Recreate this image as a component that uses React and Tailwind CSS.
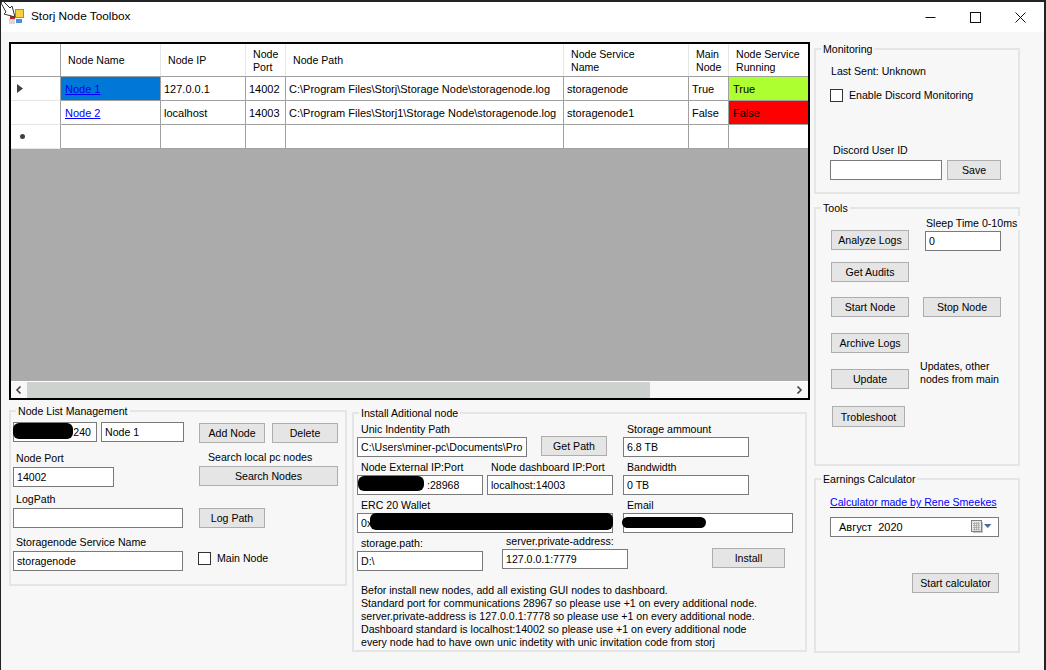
const cols = "grid grid-cols-[50px_100px_85px_40px_278px_125px_40px_79px]";

// Plain WinForms style controls
const Btn = ({ className = "", children }) => (
  <button type="button" className={`h-5 shrink-0 border border-[#adadad] bg-[#e5e5e5] text-center leading-[18px] text-black ${className}`}>
    {children}
  </button>
);

const Box = ({ className = "", children }) => (
  <div className={`relative h-5 shrink-0 whitespace-nowrap border border-[#7a7a7a] bg-white pl-[3px] leading-[18px] text-black ${className}`}>
    {children}
  </div>
);

const Label = ({ className = "", children }) => (
  <div className={`h-[14px] whitespace-nowrap pl-[3px] leading-[14px] ${className}`}>{children}</div>
);

const Field = ({ label, w, className = "", children }) => (
  <div className={`flex shrink-0 flex-col ${w} ${className}`}>
    <div className="h-[15px] whitespace-nowrap pl-[4px] leading-[14px]">{label}</div>
    <Box>{children}</Box>
  </div>
);

const Check = ({ label, className = "" }) => (
  <div className={`flex h-[13px] items-center gap-[6px] ${className}`}>
    <span className="h-[13px] w-[13px] border border-[#333] bg-white" />
    <span className="whitespace-nowrap pt-[1px]">{label}</span>
  </div>
);

const Group = ({ title, className = "", children }) => (
  <div className={`relative shrink-0 border-2 border-[#e3e6e4] ${className}`}>
    <span className="absolute -top-[8px] left-[5px] whitespace-nowrap bg-[#f7f7f7] px-[2px] leading-[14px]">{title}</span>
    {children}
  </div>
);

// Black marker strokes over private values
const Blot = ({ className = "" }) => <span className={`absolute rounded-[6px] bg-black ${className}`} />;

const Head = ({ children, className = "" }) => (
  <div className={`flex h-[32px] items-center border-r border-[#e6e6e6] pl-[7px] pt-[1px] leading-[13px] ${className}`}>{children}</div>
);

const Cell = ({ children, className = "" }) => (
  <div className={`flex h-[24px] items-center whitespace-nowrap border-b border-r border-[#a0a0a0] pl-[3px] pt-[1px] text-[11px] ${className}`}>{children}</div>
);

const RowHead = ({ children, className = "" }) => (
  <div className={`flex h-[24px] items-center border-b border-r border-b-[#e6e6e6] border-r-[#a0a0a0] ${className}`}>{children}</div>
);

const Link = ({ children }) => <span className="whitespace-nowrap text-[#0000ff] underline">{children}</span>;

const NodeGrid = () => (
  <div className="flex h-[358px] w-[801px] flex-col border-2 border-black bg-[#ababab]">
    <div className={`${cols} border-b border-[#a0a0a0] bg-white`}>
      <Head className="border-r-[#a0a0a0]" />
      <Head>Node Name</Head>
      <Head>Node IP</Head>
      <Head>Node<br />Port</Head>
      <Head>Node Path</Head>
      <Head>Node Service<br />Name</Head>
      <Head>Main<br />Node</Head>
      <Head className="whitespace-nowrap border-r-0">Node Service<br />Running</Head>
    </div>
    <div className={`${cols} bg-white`}>
      <RowHead className="pl-[6px]">
        <svg width="6" height="9" viewBox="0 0 6 9"><path d="M0 0l6 4.5L0 9z" fill="#404040" /></svg>
      </RowHead>
      <Cell className="bg-[#0078d7] pl-[4px]"><Link>Node 1</Link></Cell>
      <Cell>127.0.0.1</Cell>
      <Cell>14002</Cell>
      <Cell>C:\Program Files\Storj\Storage Node\storagenode.log</Cell>
      <Cell>storagenode</Cell>
      <Cell>True</Cell>
      <Cell className="border-r-0 bg-[#adff2f] pl-[4px]">True</Cell>

      <RowHead />
      <Cell className="pl-[4px]"><Link>Node 2</Link></Cell>
      <Cell>localhost</Cell>
      <Cell>14003</Cell>
      <Cell>C:\Program Files\Storj1\Storage Node\storagenode.log</Cell>
      <Cell>storagenode1</Cell>
      <Cell>False</Cell>
      <Cell className="border-r-0 bg-[#ff0000] pl-[4px]">False</Cell>

      <RowHead className="border-b-[#a0a0a0] pl-[9px]">
        <span className="h-[5px] w-[5px] rounded-full bg-[#404040]" />
      </RowHead>
      <Cell /><Cell /><Cell /><Cell /><Cell /><Cell />
      <Cell className="border-r-0" />
    </div>
    <div className="flex-1" />
    <div className="flex h-[17px] items-center border-t border-white bg-[#f7f7f7]">
      <svg className="ml-[4px] mr-[5px] shrink-0" width="7" height="8" viewBox="0 0 7 8"><path d="M5.5 0.5L2 4l3.5 3.5" fill="none" stroke="#444" strokeWidth="1.6" /></svg>
      <div className="h-full w-[623px] bg-[#cdd2cf]" />
      <div className="flex-1" />
      <svg className="ml-[5px] mr-[5px] shrink-0" width="7" height="8" viewBox="0 0 7 8"><path d="M1.5 0.5L5 4 1.5 7.5" fill="none" stroke="#444" strokeWidth="1.6" /></svg>
    </div>
  </div>
);

const NodeList = () => (
  <Group title="Node List Management" className="flex h-[176px] w-[338px] pl-[2px] pt-[10px]">
    <div className="flex w-[171px] shrink-0 flex-col">
      <div className="flex gap-[4px]">
        <Box className="w-[84px] pr-[5px] text-right">
          240
          <Blot className="-left-[1px] top-0 h-[16px] w-[60px]" />
        </Box>
        <Box className="w-[83px]">Node 1</Box>
      </div>
      <Label className="mt-[9px]">Node Port</Label>
      <Box className="mt-[2px] w-[101px]">14002</Box>
      <Label className="mt-[5px]">LogPath</Label>
      <Box className="mt-[2px] w-[170px]" />
      <Label className="mt-[7px]">Storagenode Service Name</Label>
      <Box className="mt-[2px] w-[170px]">storagenode</Box>
    </div>
    <div className="ml-[15px] flex w-[139px] shrink-0 flex-col">
      <div className="mt-[1px] flex gap-[7px]">
        <Btn className="w-[66px]">Add Node</Btn>
        <Btn className="w-[66px]">Delete</Btn>
      </div>
      <Label className="ml-[6px] mt-[7px]">Search local pc nodes</Label>
      <Btn className="mt-[2px] w-[139px]">Search Nodes</Btn>
      <Btn className="mt-[22px] w-[66px]">Log Path</Btn>
      <Check label="Main Node" className="-ml-[1px] mt-[24px]" />
    </div>
  </Group>
);

const InstallNode = () => (
  <Group title="Install Aditional node" className="mt-[2px] flex h-[240px] w-[455px] flex-col gap-[3px] pl-[3px] pt-[8px]">
    <div className="flex">
      <Field label="Unic Indentity Path" w="w-[170px]">
        <div className="overflow-hidden">C:\Users\miner-pc\Documents\Pro</div>
      </Field>
      <Btn className="ml-[14px] mt-[14px] w-[66px]">Get Path</Btn>
      <Field label="Storage ammount" w="w-[126px]" className="ml-[16px]">6.8 TB</Field>
    </div>
    <div className="flex">
      <Field label="Node External IP:Port" w="w-[126px]">
        <div className="pl-[66px]">:28968</div>
        <Blot className="left-0 top-0 h-[15px] w-[66px]" />
      </Field>
      <Field label="Node dashboard IP:Port" w="w-[126px]" className="ml-[4px]">localhost:14003</Field>
      <Field label="Bandwidth" w="w-[126px]" className="ml-[10px]">0 TB</Field>
    </div>
    <div className="flex">
      <Field label="ERC 20 Wallet" w="w-[256px]">
        0x
        <Blot className="left-[12px] -top-[1px] h-[17px] w-[243px]" />
      </Field>
      <Field label="Email" w="w-[170px]" className="ml-[10px]">
        <Blot className="-left-[2px] top-[3px] h-[11px] w-[84px]" />
      </Field>
    </div>
    <div className="flex">
      <Field label="storage.path:" w="w-[126px]">D:\</Field>
      <Field label="server.private-address:" w="w-[126px]" className="-mt-[2px] ml-[19px]">127.0.0.1:7779</Field>
      <Btn className="ml-[84px] mt-[12px] w-[73px]">Install</Btn>
    </div>
    <div className="ml-[4px] mt-[10px] whitespace-nowrap leading-[13px]">
      Befor install new nodes, add all existing GUI nodes to dashboard.<br />
      Standard port for communications 28967 so please use +1 on every additional node.<br />
      server.private-address is 127.0.0.1:7778 so please use +1 on every additional node.<br />
      Dashboard standard is localhost:14002 so please use +1 on every additional node<br />
      every node had to have own unic indetity with unic invitation code from storj
    </div>
  </Group>
);

const Monitoring = () => (
  <Group title="Monitoring" className="flex h-[146px] w-[206px] flex-col pl-[14px]">
    <Label className="-ml-[2px] mt-[14px]">Last Sent: Unknown</Label>
    <Check label="Enable Discord Monitoring" className="mt-[11px]" />
    <Label className="mt-[41px]">Discord User ID</Label>
    <div className="mt-[3px] flex gap-[5px]">
      <Box className="w-[112px]" />
      <Btn className="w-[54px]">Save</Btn>
    </div>
  </Group>
);

const Tools = () => (
  <Group title="Tools" className="mt-[13px] flex h-[259px] w-[206px] flex-col pl-[15px]">
    <div className="mt-[7px] flex">
      <Btn className="mt-[14px] w-[78px]">Analyze Logs</Btn>
      <div className="ml-[16px] flex shrink-0 flex-col">
        <div className="h-[14px] w-[96px] whitespace-nowrap bg-[#f7f7f7] pl-[1px] leading-[14px]">Sleep Time 0-10ms</div>
        <Box className="mt-[1px] w-[76px]">0</Box>
      </div>
    </div>
    <Btn className="mt-[11px] w-[78px]">Get Audits</Btn>
    <div className="mt-[15px] flex gap-[14px]">
      <Btn className="w-[78px]">Start Node</Btn>
      <Btn className="w-[78px]">Stop Node</Btn>
    </div>
    <Btn className="mt-[16px] w-[78px]">Archive Logs</Btn>
    <div className="mt-[16px] flex">
      <Btn className="w-[78px]">Update</Btn>
      <div className="-mt-[9px] ml-[11px] whitespace-nowrap leading-[13px]">Updates, other<br />nodes from main</div>
    </div>
    <Btn className="ml-[1px] mt-[17px] h-[21px] w-[73px]">Trobleshoot</Btn>
  </Group>
);

const Earnings = () => (
  <Group title="Earnings Calculator" className="mt-[12px] flex h-[175px] w-[206px] flex-col pl-[14px]">
    <div className="mt-[15px] h-[14px] leading-[14px]"><Link>Calculator made by Rene Smeekes</Link></div>
    <div className="mt-[8px] flex h-5 w-[169px] items-center border border-[#7a7a7a] bg-white pl-[8px] pr-[6px]">
      <span className="flex-1 whitespace-pre text-[11px]">Август  2020</span>
      <svg width="21" height="14" viewBox="0 0 21 14">
        <rect x="0.5" y="0.5" width="10" height="11" fill="#e8e8e8" stroke="#808080" />
        <path d="M2 3.5h7M2 5.5h7M2 7.5h7M2 9.5h7M3.5 2v8.5M5.5 2v8.5M7.5 2v8.5" stroke="#a8a8a8" strokeWidth="0.8" />
        <path d="M11.5 2v10.5H2" fill="none" stroke="#c4c4c4" />
        <path d="M13 4h7.5l-3.75 4z" fill="#4a6a8f" />
      </svg>
    </div>
    <Btn className="ml-[82px] mt-[36px] w-[87px]">Start calculator</Btn>
  </Group>
);

const AppIcon = () => (
  <svg className="shrink-0" width="16" height="16" viewBox="0 0 16 16">
    <rect x="0" y="10" width="6" height="5" fill="#d8d8d8" />
    <rect x="1" y="5" width="5" height="5" fill="#c8201c" />
    <rect x="6.5" y="0.5" width="8" height="8" fill="#f8d040" stroke="#b08a30" />
    <rect x="7" y="10" width="6" height="4" fill="#4a90d8" />
  </svg>
);

const TitleButtons = () => (
  <div className="flex">
    <div className="flex h-[30px] w-[45px] items-center justify-center">
      <svg width="11" height="11" viewBox="0 0 11 11"><path d="M0.5 5.5h10" stroke="#111" /></svg>
    </div>
    <div className="flex h-[30px] w-[45px] items-center justify-center">
      <svg width="11" height="11" viewBox="0 0 11 11"><rect x="0.5" y="0.5" width="10" height="10" fill="none" stroke="#111" /></svg>
    </div>
    <div className="flex h-[30px] w-[45px] items-center justify-center">
      <svg width="11" height="11" viewBox="0 0 11 11"><path d="M0.5 0.5l10 10M10.5 0.5l-10 10" stroke="#111" /></svg>
    </div>
  </div>
);

export default function App() {
  return (
    <div className="relative h-[670px] w-[1046px] overflow-hidden bg-[#222] pl-[1px] pr-[2px] pt-[2px] font-['Liberation_Sans',Arial,sans-serif] text-[10.6px] text-black">
      <div className="flex h-[30px] items-center justify-between bg-white pl-[8px] pr-[1px]">
        <div className="flex items-center gap-[6px] text-[11.8px]">
          <AppIcon />
          <span>Storj Node Toolbox</span>
        </div>
        <TitleButtons />
      </div>
      <div className="flex h-[638px] bg-[#f7f7f7] pl-[8px] pt-[10px]">
        <div className="flex w-[801px] shrink-0 flex-col">
          <NodeGrid />
          <div className="mt-[10px] flex items-start gap-[5px]">
            <NodeList />
            <InstallNode />
          </div>
        </div>
        <div className="ml-[4px] flex flex-col pt-[6px]">
          <Monitoring />
          <Tools />
          <Earnings />
        </div>
      </div>
      {/* mouse pointer caught in the screenshot */}
      <svg className="absolute left-0 top-0" width="20" height="20" viewBox="0 0 20 20">
        <path d="M1 3l2-2 7 7 2-2 3 11-11-3 2-2z" fill="#fff" stroke="#333" strokeWidth="1" />
      </svg>
    </div>
  );
}
